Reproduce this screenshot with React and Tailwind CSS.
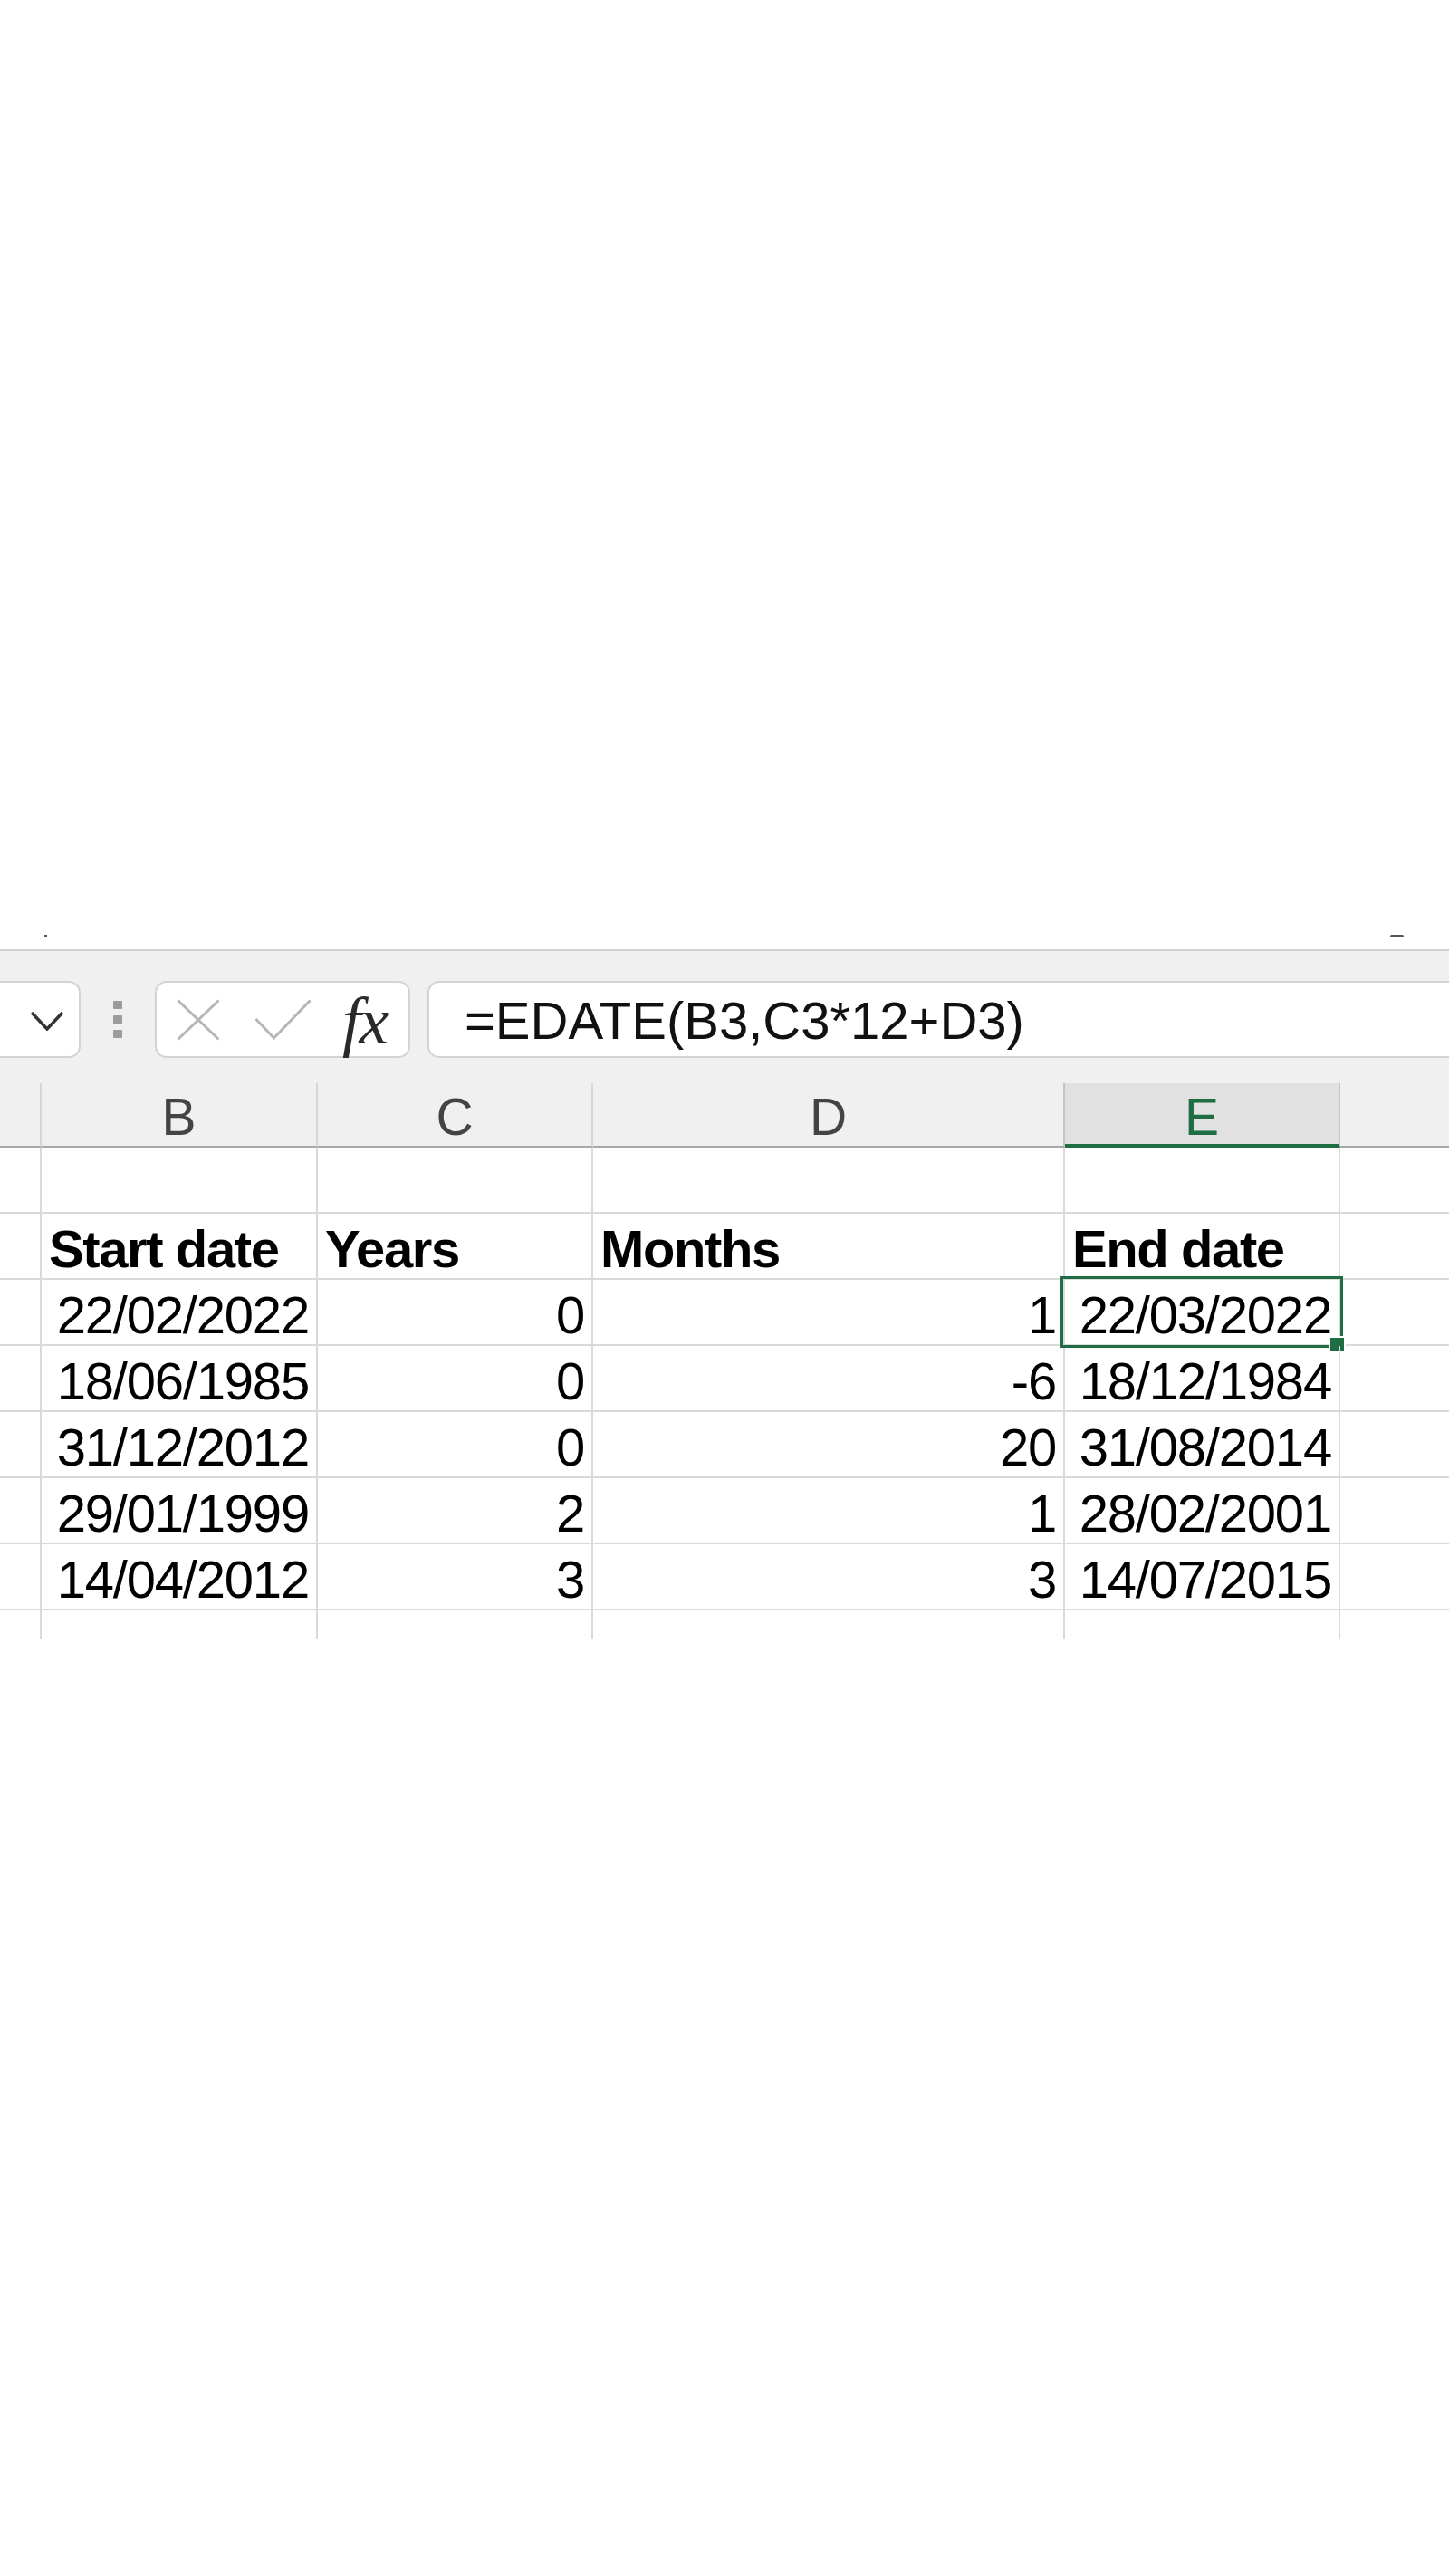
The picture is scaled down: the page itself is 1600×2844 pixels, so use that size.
import React from "react";

const rows = [
  ["22/02/2022", "0", "1", "22/03/2022"],
  ["18/06/1985", "0", "-6", "18/12/1984"],
  ["31/12/2012", "0", "20", "31/08/2014"],
  ["29/01/1999", "2", "1", "28/02/2001"],
  ["14/04/2012", "3", "3", "14/07/2015"],
];

const gridCols = "grid grid-cols-[46px_305px_304px_521px_304px_1fr]";

function Cell({ children, right, bold, last, className = "" }) {
  return (
    <div
      className={`h-full ${last ? "" : "border-r-2 border-[#dadada]"} flex items-end pb-[3px] overflow-visible whitespace-nowrap text-[58px] leading-[58px] text-black ${
        right ? "justify-end pr-[8px]" : "justify-start pl-[8px]"
      } ${bold ? "font-bold tracking-[-1.4px]" : "tracking-[-1.2px]"} ${className}`}
    >
      {children}
    </div>
  );
}

function Row({ cells, bold, selectedRow, noBottom, h = "h-[73px]" }) {
  return (
    <div className={`${gridCols} ${h} ${noBottom ? "" : "border-b-2 border-[#dadada]"}`}>
      <Cell />
      <Cell right={!bold} bold={bold}>{cells ? cells[0] : null}</Cell>
      <Cell right={!bold} bold={bold}>{cells ? cells[1] : null}</Cell>
      <Cell right={!bold} bold={bold}>{cells ? cells[2] : null}</Cell>
      <Cell right={!bold} bold={bold} className="relative">
        {cells ? cells[3] : null}
        {selectedRow && (
          <>
            <div className="absolute left-[-5px] top-[-4px] w-[312px] h-[79px] border-[3px] border-[#1f6e43] pointer-events-none" />
            <div className="absolute left-[291px] top-[62px] w-[19px] h-[19px] bg-[#1f6e43] border-2 border-white" />
          </>
        )}
      </Cell>
      <Cell last />
    </div>
  );
}

export default function App() {
  return (
    <div className="w-[1600px] h-[2844px] bg-white overflow-hidden font-['Liberation_Sans',Arial,sans-serif]">
      {/* top blank area with tiny cut-off marks */}
      <div className="h-[1048px] flex items-end justify-between pb-[13px] pl-[49px] pr-[50px]">
        <div className="w-[3px] h-[3px] bg-[#555]" />
        <div className="w-[15px] h-[3px] bg-[#555] rounded-full" />
      </div>

      {/* toolbar */}
      <div className="border-t-2 border-[#cfcfcf] bg-[#f0f0f0]">
        <div className="pt-[33px] pb-[28px] flex items-start">
          {/* name box */}
          <div className="-ml-[20px] w-[109px] h-[85px] rounded-[13px] border-2 border-[#d3d3d3] bg-white flex items-center justify-end pr-[16px]">
            <svg width="38" height="22" viewBox="0 0 38 22" className="mt-[3px]">
              <polyline points="2,2 19,20 36,2" fill="none" stroke="#333" strokeWidth="3.5" />
            </svg>
          </div>
          {/* dots */}
          <div className="ml-[36px] h-[85px] flex flex-col justify-center gap-[7px]">
            <div className="w-[10px] h-[9px] bg-[#9c9c9c] rounded-[1px]" />
            <div className="w-[10px] h-[9px] bg-[#9c9c9c] rounded-[1px]" />
            <div className="w-[10px] h-[9px] bg-[#9c9c9c] rounded-[1px]" />
          </div>
          {/* fx box */}
          <div className="ml-[36px] w-[282px] h-[85px] rounded-[13px] border-2 border-[#d3d3d3] bg-white flex items-center pl-[22px]">
            <svg width="48" height="46" viewBox="0 0 48 46">
              <line x1="1.5" y1="1.5" x2="46.5" y2="44.5" stroke="#b6b6b6" strokeWidth="3" />
              <line x1="46.5" y1="1.5" x2="1.5" y2="44.5" stroke="#b6b6b6" strokeWidth="3" />
            </svg>
            <svg width="63" height="45" viewBox="0 0 63 45" className="ml-[38px]">
              <polyline points="1.5,22 21.5,43 61.5,1.5" fill="none" stroke="#b6b6b6" strokeWidth="3" />
            </svg>
            <span className="ml-[34px] font-['Liberation_Serif',serif] italic text-[74px] leading-[74px] text-[#2a2a2a] tracking-[-2px] mt-[2px]">
              fx
            </span>
          </div>
          {/* formula box */}
          <div className="ml-[19px] flex-1 -mr-[40px] h-[85px] rounded-[13px] border-2 border-[#d3d3d3] bg-white flex items-center pl-[39px]">
            <span className="text-[58px] leading-[58px] text-[#111] whitespace-nowrap mt-[3px]">
              =EDATE(B3,C3*12+D3)
            </span>
          </div>
        </div>

        {/* column headers */}
        <div className={`${gridCols} h-[71px]`}>
          <div className="border-r-2 border-b-2 border-r-[#d6d6d6] border-b-[#a8a8a8]" />
          {["B", "C", "D"].map((l, i) => (
            <div
              key={l}
              className={`border-r-2 border-b-2 border-b-[#a8a8a8] ${i === 2 ? "border-r-[#c4c4c4]" : "border-r-[#d6d6d6]"} flex items-end justify-center pb-[3px] text-[57px] leading-[57px] text-[#444]`}
            >
              {l}
            </div>
          ))}
          <div className="bg-[#e1e1e1] border-r-2 border-r-[#c4c4c4] border-b-4 border-b-[#1f6e43] flex items-end justify-center pb-[1px] text-[57px] leading-[57px] text-[#1f6e43]">
            E
          </div>
          <div className="border-b-2 border-b-[#a8a8a8]" />
        </div>
      </div>

      {/* grid */}
      <div className="bg-white">
        <Row />
        <Row cells={["Start date", "Years", "Months", "End date"]} bold />
        {rows.map((r, i) => (
          <Row key={i} cells={r} selectedRow={i === 0} />
        ))}
        <Row noBottom h="h-[32px]" />
      </div>
    </div>
  );
}
